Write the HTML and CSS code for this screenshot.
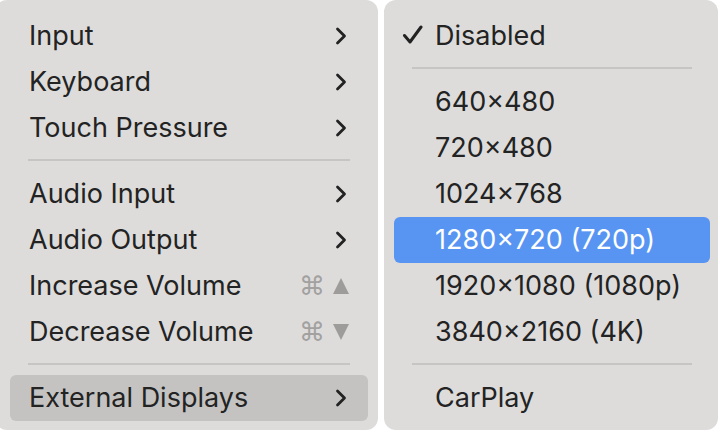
FILE: index.html
```html
<!DOCTYPE html>
<html lang="en">
<head>
  <meta charset="UTF-8">
  <title>Menu</title>
  <link rel="stylesheet" href="styles.css">
</head>
<body>
  <div class="menus">
    <div class="panel left">
      <div class="row"><span>Input</span><svg class="chev" viewBox="0 0 12 18"><path d="M2.5 2 L9.5 9 L2.5 16"/></svg></div>
      <div class="row"><span>Keyboard</span><svg class="chev" viewBox="0 0 12 18"><path d="M2.5 2 L9.5 9 L2.5 16"/></svg></div>
      <div class="row"><span>Touch Pressure</span><svg class="chev" viewBox="0 0 12 18"><path d="M2.5 2 L9.5 9 L2.5 16"/></svg></div>
      <div class="sep"></div>
      <div class="row"><span>Audio Input</span><svg class="chev" viewBox="0 0 12 18"><path d="M2.5 2 L9.5 9 L2.5 16"/></svg></div>
      <div class="row"><span>Audio Output</span><svg class="chev" viewBox="0 0 12 18"><path d="M2.5 2 L9.5 9 L2.5 16"/></svg></div>
      <div class="row"><span>Increase Volume</span><span class="keys"><span class="cmd">⌘</span><svg class="tri" viewBox="0 0 18 18"><path d="M9 1 L17 17 L1 17 Z"/></svg></span></div>
      <div class="row"><span>Decrease Volume</span><span class="keys"><span class="cmd">⌘</span><svg class="tri" viewBox="0 0 18 18"><path d="M1 1 L17 1 L9 17 Z"/></svg></span></div>
      <div class="sep"></div>
      <div class="row open"><span>External Displays</span><svg class="chev" viewBox="0 0 12 18"><path d="M2.5 2 L9.5 9 L2.5 16"/></svg></div>
    </div>
    <div class="panel right">
      <div class="row"><svg class="check" viewBox="0 0 22 20"><path d="M2.5 10.5 L8 17 L19 2"/></svg><span>Disabled</span></div>
      <div class="sep"></div>
      <div class="row"><span>640×480</span></div>
      <div class="row"><span>720×480</span></div>
      <div class="row"><span>1024×768</span></div>
      <div class="row active"><span>1280×720 (720p)</span></div>
      <div class="row"><span>1920×1080 (1080p)</span></div>
      <div class="row"><span>3840×2160 (4K)</span></div>
      <div class="sep"></div>
      <div class="row"><span>CarPlay</span></div>
    </div>
  </div>
</body>
</html>
```

FILE: styles.css
```css
body {
  margin: 0;
  background: #fff;
  font-family: Inter, "Open Sans", sans-serif;
  color: #232323;
}

.menus {
  display: flex;
  gap: 6px;
  margin-left: -5px;
}

.panel {
  height: 430px;
  box-sizing: border-box;
  background: #dddcdb;
  border-radius: 12px;
  padding-top: 13px;
}

.left {
  width: 383px;
  padding-left: 15px;
  padding-right: 10px;
}

.right {
  width: 334px;
  padding-left: 10px;
  padding-right: 8px;
}

.row {
  position: relative;
  box-sizing: border-box;
  height: 46px;
  display: flex;
  align-items: center;
  justify-content: space-between;
  font-size: 27px;
  border-radius: 6px;
  padding: 0 21px 1px 19px;
}

.right .row {
  justify-content: flex-start;
  padding-left: 41px;
}

.row.open {
  background: #c4c3c2;
}

.row.active {
  background: #5895f3;
  color: #fff;
}

.sep {
  height: 2px;
  background: #c6c5c4;
  margin: 8px 18px 10px;
}

.chev {
  width: 12px;
  height: 18px;
  fill: none;
  stroke: #222;
  stroke-width: 2.8;
  stroke-linecap: round;
  stroke-linejoin: round;
}

.check {
  position: absolute;
  left: 8px;
  top: 12px;
  width: 22px;
  height: 20px;
  fill: none;
  stroke: #222;
  stroke-width: 3;
  stroke-linecap: round;
  stroke-linejoin: round;
}

.keys {
  display: flex;
  align-items: center;
  gap: 7px;
  margin-right: -3px;
}

.cmd {
  font-family: "DejaVu Sans", sans-serif;
  font-size: 26px;
  line-height: 1;
  color: #a2a1a0;
}

.tri {
  width: 18px;
  height: 18px;
  fill: #9d9c9b;
}
```
